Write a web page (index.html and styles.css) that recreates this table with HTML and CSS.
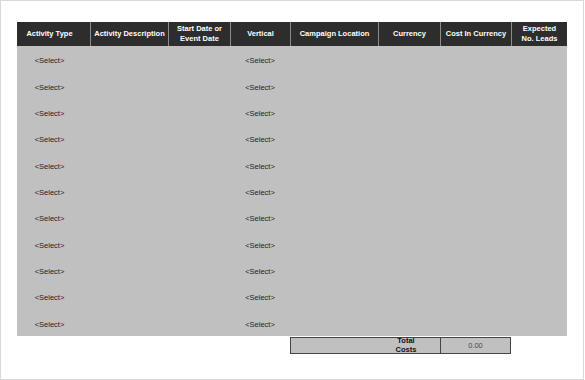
FILE: index.html
```html
<!DOCTYPE html>
<html lang="en">
<head>
<meta charset="utf-8">
<title>Campaign Cost Plan</title>
<link rel="stylesheet" href="styles.css">
</head>
<body>
<div class="sheet">
  <div class="plan">
    <div class="head">
      <div class="hc c1">Activity Type</div>
      <div class="hc">Activity Description</div>
      <div class="hc">Start Date or<br>Event Date</div>
      <div class="hc">Vertical</div>
      <div class="hc">Campaign Location</div>
      <div class="hc">Currency</div>
      <div class="hc">Cost In Currency</div>
      <div class="hc">Expected<br>No. Leads</div>
    </div>
    <div class="body">
      <div class="row"><span class="sel c1">&lt;Select&gt;</span><span></span><span></span><span class="sel">&lt;Select&gt;</span></div>
      <div class="row"><span class="sel c1">&lt;Select&gt;</span><span></span><span></span><span class="sel">&lt;Select&gt;</span></div>
      <div class="row"><span class="sel c1">&lt;Select&gt;</span><span></span><span></span><span class="sel">&lt;Select&gt;</span></div>
      <div class="row"><span class="sel c1">&lt;Select&gt;</span><span></span><span></span><span class="sel">&lt;Select&gt;</span></div>
      <div class="row"><span class="sel c1">&lt;Select&gt;</span><span></span><span></span><span class="sel">&lt;Select&gt;</span></div>
      <div class="row"><span class="sel c1">&lt;Select&gt;</span><span></span><span></span><span class="sel">&lt;Select&gt;</span></div>
      <div class="row"><span class="sel c1">&lt;Select&gt;</span><span></span><span></span><span class="sel">&lt;Select&gt;</span></div>
      <div class="row"><span class="sel c1">&lt;Select&gt;</span><span></span><span></span><span class="sel">&lt;Select&gt;</span></div>
      <div class="row"><span class="sel c1">&lt;Select&gt;</span><span></span><span></span><span class="sel">&lt;Select&gt;</span></div>
      <div class="row"><span class="sel c1">&lt;Select&gt;</span><span></span><span></span><span class="sel">&lt;Select&gt;</span></div>
      <div class="row"><span class="sel c1">&lt;Select&gt;</span><span></span><span></span><span class="sel">&lt;Select&gt;</span></div>
    </div>
    <div class="totals">
      <div class="total-box">
        <div class="tlabel"><span>Total Costs</span></div>
        <div class="tvalue">0.00</div>
      </div>
    </div>
  </div>
</div>
</body>
</html>
```

FILE: styles.css
```css
html, body {
  margin: 0;
  padding: 0;
  background: #ffffff;
}

.sheet {
  box-sizing: border-box;
  width: 584px;
  height: 380px;
  border: 1px solid #d9d9d9;
  padding: 21px 0 0 16px;
  font-family: "Liberation Sans", Arial, sans-serif;
  font-size: 7.5px;
}

.plan {
  width: 550px;
}

.head,
.row,
.totals {
  display: grid;
  grid-template-columns: 73px 78px 62px 60px 88px 62px 71px 56px;
}

.head {
  height: 24px;
  background: #2d2d2d;
  color: #ffffff;
  font-weight: bold;
}

.hc {
  display: flex;
  align-items: center;
  justify-content: center;
  text-align: center;
  line-height: 10px;
  border-left: 1px solid #8c8c8c;
}

.hc.c1 {
  border-left: none;
  padding-right: 8px;
}

.body {
  height: 290px;
  background: #c0c0c0;
  display: grid;
  grid-template-rows: repeat(11, 1fr);
}

.sel {
  display: flex;
  align-items: center;
  justify-content: center;
  padding-top: 3px;
  color: #1e1e28;
}

.sel.c1 {
  padding-right: 8px;
}

.totals {
  margin-top: 1px;
}

.total-box {
  grid-column: 5 / 8;
  box-sizing: border-box;
  height: 17px;
  display: grid;
  grid-template-columns: 150px 1fr;
  background: #c0c0c0;
  border: 1px solid #444444;
}

.tlabel {
  display: flex;
  align-items: flex-end;
  justify-content: flex-end;
  overflow: hidden;
  padding-right: 21px;
  border-right: 1px solid #444444;
}

.tlabel span {
  display: block;
  width: 26px;
  text-align: center;
  font-weight: bold;
  color: #111111;
  line-height: 9px;
  margin-bottom: -1px;
}

.tvalue {
  display: flex;
  align-items: center;
  justify-content: center;
  color: #4a4a4a;
}
```
